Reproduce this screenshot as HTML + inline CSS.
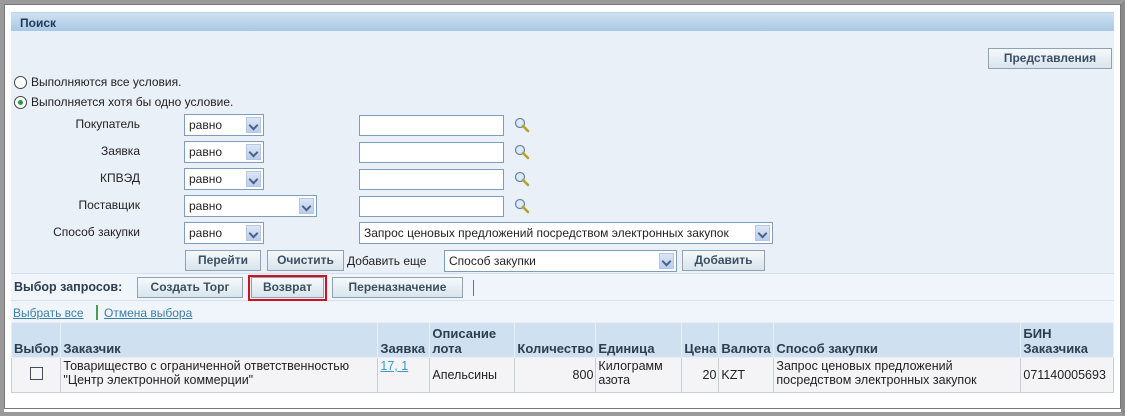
<!DOCTYPE html><html><head><meta charset="utf-8"><style>
*{box-sizing:border-box;margin:0;padding:0}
body{width:1125px;height:416px;background:#fff;font-family:"Liberation Sans","DejaVu Sans",sans-serif;font-size:12px;color:#222;position:relative;overflow:hidden}
.a{position:absolute}
.outer{left:0;top:0;width:1125px;height:416px;border:4px solid #9a9a9a;border-right-color:#8a8a8a}
.inner{left:4px;top:4px;width:1117px;height:405px;border:1px solid #777;background:#fff}
.panel{left:11px;top:12px;width:1103px;height:380px;background:#eaf0f7}
.hdr{left:11px;top:12px;width:1103px;height:19px;background:linear-gradient(#cfe1f1,#a9c8e4);border-top:1px solid #c0d4e8;font-weight:bold;font-size:12px;color:#213a58;padding:3px 0 0 9px}
.btn{position:absolute;height:21px;border:1px solid #8ea2b4;background:linear-gradient(#f6f9fb,#d8e4ec);font-weight:bold;color:#3b4f63;font-size:12px;text-align:center;line-height:19px}
.sel{position:absolute;height:22px;border:1px solid #7f9db9;background:#fff;padding-left:4px;line-height:20px;font-size:12px}
.sel i{position:absolute;right:2px;top:2px;width:15px;height:16px;background:linear-gradient(#dbe6f6,#b8cdef);border:1px solid #b4c6e4}
.sel i:after{content:"";position:absolute;left:3px;top:4px;width:5px;height:5px;border-right:2px solid #4d6185;border-bottom:2px solid #4d6185;transform:rotate(45deg)}
.inp{position:absolute;width:145px;height:21px;border:1px solid #7f9db9;background:#fff}
.lbl{position:absolute;width:130px;text-align:right;left:10px}
.mag{position:absolute;width:16px;height:16px}
.rad{position:absolute;left:14px;width:13px;height:13px;border:1px solid #444;border-radius:50%;background:#fff}
td,th{border:1px solid #c9ced4;padding:1px 2px;vertical-align:bottom;text-align:left}
th{font-weight:bold;color:#2c3e50;background:#cfe0f0;border-color:#e7eef6;font-size:13px}
td{font-size:12.5px}
table{border-collapse:collapse;position:absolute;left:11px;top:322px;width:1103px}
</style></head><body>
<div class="a outer"></div><div class="a inner"></div>
<div class="a panel"></div>
<div class="a hdr">Поиск</div>
<div class="btn" style="left:988px;top:48px;width:124px">Представления</div>
<div class="rad" style="top:76px"></div><div class="a" style="left:31px;top:75px">Выполняются все условия.</div>
<div class="rad" style="top:96px"></div><div class="a" style="left:18px;top:100px;width:5px;height:5px;border-radius:50%;background:#2a9a40"></div><div class="a" style="left:31px;top:95px">Выполняется хотя бы одно условие.</div>

<div class="lbl" style="top:117px">Покупатель</div>
<div class="lbl" style="top:144px">Заявка</div>
<div class="lbl" style="top:171px">КПВЭД</div>
<div class="lbl" style="top:198px">Поставщик</div>
<div class="lbl" style="top:225px">Способ закупки</div>

<div class="sel" style="left:184px;top:114px;width:80px">равно<i></i></div>
<div class="sel" style="left:184px;top:141px;width:80px">равно<i></i></div>
<div class="sel" style="left:184px;top:168px;width:80px">равно<i></i></div>
<div class="sel" style="left:184px;top:195px;width:133px">равно<i></i></div>
<div class="sel" style="left:184px;top:222px;width:80px">равно<i></i></div>

<div class="inp" style="left:359px;top:115px"></div>
<div class="inp" style="left:359px;top:142px"></div>
<div class="inp" style="left:359px;top:169px"></div>
<div class="inp" style="left:359px;top:196px"></div>
<div class="sel" style="left:359px;top:222px;width:414px">Запрос ценовых предложений посредством электронных закупок<i></i></div>

<svg class="mag" style="left:514px;top:117px" viewBox="0 0 16 16"><circle cx="6" cy="6" r="4.5" fill="#dceaf7" stroke="#6d87a8" stroke-width="1.3"/><path d="M9 9l5 5" stroke="#b5a22a" stroke-width="2.6" stroke-linecap="round"/></svg>
<svg class="mag" style="left:514px;top:144px" viewBox="0 0 16 16"><circle cx="6" cy="6" r="4.5" fill="#dceaf7" stroke="#6d87a8" stroke-width="1.3"/><path d="M9 9l5 5" stroke="#b5a22a" stroke-width="2.6" stroke-linecap="round"/></svg>
<svg class="mag" style="left:514px;top:171px" viewBox="0 0 16 16"><circle cx="6" cy="6" r="4.5" fill="#dceaf7" stroke="#6d87a8" stroke-width="1.3"/><path d="M9 9l5 5" stroke="#b5a22a" stroke-width="2.6" stroke-linecap="round"/></svg>
<svg class="mag" style="left:514px;top:198px" viewBox="0 0 16 16"><circle cx="6" cy="6" r="4.5" fill="#dceaf7" stroke="#6d87a8" stroke-width="1.3"/><path d="M9 9l5 5" stroke="#b5a22a" stroke-width="2.6" stroke-linecap="round"/></svg>

<div class="btn" style="left:185px;top:250px;width:76px">Перейти</div>
<div class="btn" style="left:267px;top:250px;width:77px">Очистить</div>
<div class="a" style="left:347px;top:254px">Добавить еще</div>
<div class="sel" style="left:444px;top:250px;width:233px">Способ закупки<i></i></div>
<div class="btn" style="left:682px;top:250px;width:83px">Добавить</div>

<div class="a" style="left:11px;top:273px;width:1103px;height:28px;background:#f0f5fb;border-top:1px solid #d5e0ea;border-bottom:1px solid #d5e0ea"></div>
<div class="a" style="left:14px;top:280px;font-weight:bold;color:#2c3e50;font-size:12.5px">Выбор запросов:</div>
<div class="btn" style="left:137px;top:277px;width:106px">Создать Торг</div>
<div class="a" style="left:248px;top:275px;width:79px;height:26px;border:2px solid #d0101c"></div>
<div class="btn" style="left:251px;top:277px;width:73px">Возврат</div>
<div class="btn" style="left:332px;top:277px;width:131px">Переназначение</div>
<div class="a" style="left:473px;top:280px;width:1px;height:16px;background:#3a9a4a"></div>

<div class="a" style="left:11px;top:301px;width:1103px;height:21px;background:#f0f5fb"></div>
<div class="a" style="left:13px;top:306px;color:#3a7fa3;text-decoration:underline">Выбрать все</div>
<div class="a" style="left:96px;top:305px;width:2px;height:15px;background:#4aa04a"></div>
<div class="a" style="left:104px;top:306px;color:#3a7fa3;text-decoration:underline">Отмена выбора</div>

<table>
<tr style="height:35px"><th style="width:47px">Выбор</th><th style="width:317px">Заказчик</th><th style="width:52px">Заявка</th><th style="width:85px">Описание<br>лота</th><th style="width:81px">Количество</th><th style="width:86px">Единица</th><th style="width:37px">Цена</th><th style="width:55px">Валюта</th><th style="width:247px">Способ закупки</th><th>БИН<br>Заказчика</th></tr>
<tr style="height:35px;background:#f4f4f6"><td style="vertical-align:middle;text-align:center"><div style="display:inline-block;width:13px;height:13px;border:1px solid #3c4f63;background:#f6f6f6"></div></td><td style="vertical-align:top">Товарищество с ограниченной ответственностью<br>"Центр электронной коммерции"</td><td style="vertical-align:top;color:#3a9ac9;text-decoration:underline">17, 1</td><td style="vertical-align:middle">Апельсины</td><td style="vertical-align:middle;text-align:right">800</td><td style="vertical-align:top">Килограмм<br>азота</td><td style="vertical-align:middle;text-align:right">20</td><td style="vertical-align:middle">KZT</td><td style="vertical-align:top">Запрос ценовых предложений<br>посредством электронных закупок</td><td style="vertical-align:middle">071140005693</td></tr>
</table>
</body></html>
